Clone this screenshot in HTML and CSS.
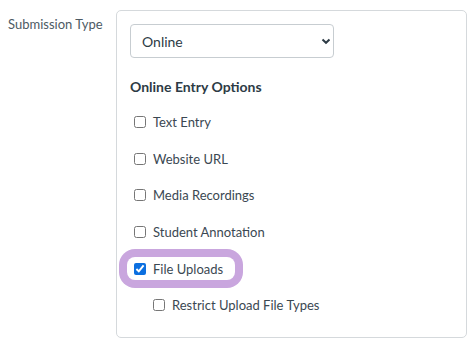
FILE: index.html
```html
<!DOCTYPE html>
<html>
<head>
<meta charset="utf-8">
<link rel="stylesheet" href="styles.css">
</head>
<body>
<div class="form-row">
  <div class="row-label">Submission Type</div>
  <div class="panel">
    <select class="type-select">
      <option>Online</option>
    </select>
    <div class="options-heading">Online Entry Options</div>
    <div class="options">
      <label class="opt"><input type="checkbox"><span>Text Entry</span></label>
      <label class="opt"><input type="checkbox"><span>Website URL</span></label>
      <label class="opt"><input type="checkbox"><span>Media Recordings</span></label>
      <label class="opt"><input type="checkbox"><span>Student Annotation</span></label>
      <div class="opt-row"><label class="opt highlighted"><input type="checkbox" checked><span>File Uploads</span></label></div>
      <label class="opt sub"><input type="checkbox"><span>Restrict Upload File Types</span></label>
    </div>
  </div>
</div>
</body>
</html>
```

FILE: styles.css
```css
html, body {
  margin: 0;
  padding: 0;
  background: #fff;
}
body {
  font-family: Lato, "Noto Sans", sans-serif;
  color: #2d3b45;
  width: 474px;
  height: 345px;
  overflow: hidden;
}
.form-row {
  display: flex;
  align-items: flex-start;
  padding-top: 10px;
}
.row-label {
  width: 108px;
  padding-left: 8px;
  padding-top: 5px;
  font-size: 13px;
  color: #4d5a63;
  line-height: 18px;
}
.panel {
  box-sizing: border-box;
  width: 351px;
  height: 328px;
  border: 1px solid #d5d9dc;
  border-radius: 5px;
  padding: 13px 0 0 13px;
}
.type-select {
  display: block;
  width: 204px;
  height: 34px;
  margin: 0;
  border: 1px solid #c7cdd1;
  border-radius: 4px;
  background: #fff url("data:image/svg+xml;utf8,<svg xmlns='http://www.w3.org/2000/svg' width='10' height='8' viewBox='0 0 10 8'><path d='M1.5 2.5 L5 5.8 L8.5 2.5' fill='none' stroke='%232d3b45' stroke-width='2'/></svg>") no-repeat 190px 50%;
  -webkit-appearance: none;
  appearance: none;
  font-family: Lato, "Noto Sans", sans-serif;
  font-size: 14px;
  color: #2d3b45;
  padding: 0 0 0 11px;
}
.options-heading {
  margin-top: 19px;
  font-size: 14px;
  font-weight: 700;
  line-height: 20px;
  color: #2d3b45;
}
.options {
  display: flex;
  flex-direction: column;
  margin-top: 7px;
}
.opt, .opt-row {
  display: flex;
  align-items: center;
  height: 36.6px;
  font-size: 13px;
  color: #3b4852;
}
.opt input {
  width: 12px;
  height: 12px;
  margin: 0 7px 0 4px;
  accent-color: #0b6fe0;
}
.opt-row .opt {
  height: 23px;
  margin-left: -3px;
  padding: 0 12px 0 7px;
  border-radius: 8px;
  background: #fff;
}
.opt-row .opt input {
  margin-left: 0;
}
.highlighted {
  box-shadow: 0 0 0 8px #c9a6de;
}
.opt.sub {
  padding-left: 19px;
}
```
